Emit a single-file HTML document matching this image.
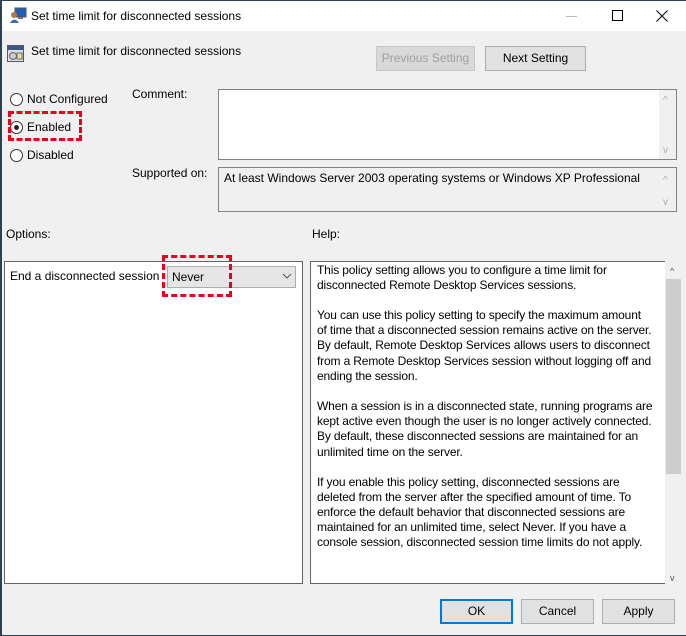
<!DOCTYPE html>
<html><head><meta charset="utf-8"><style>
*{margin:0;padding:0;box-sizing:border-box}
body{width:686px;height:636px;overflow:hidden;background:#2f4050;font-family:"Liberation Sans",sans-serif;font-size:12px;color:#000;position:relative}
.win{position:absolute;left:2px;top:1px;width:684px;height:634px;background:#f0f0f0}
.t{position:absolute;white-space:nowrap;line-height:15px}
.box{position:absolute;border:1px solid #828282;background:#fff}
.btn{position:absolute;background:#e1e1e1;border:1px solid #adadad;text-align:center;line-height:23px;height:25px}
.rad{position:absolute;width:13px;height:13px;border:1px solid #333;border-radius:50%;background:#fff}
.dash{position:absolute;border:3px dashed #e8001c}
.h{position:absolute;left:315px;white-space:nowrap;font-size:12px;letter-spacing:-0.15px}
</style></head><body>
<div class="win">
<div style="position:absolute;left:0;top:0;width:684px;height:30px;background:#fff"></div>
<svg style="position:absolute;left:7px;top:5px" width="18" height="18" viewBox="0 0 18 18"><rect x="6" y="2" width="11" height="9" fill="#1f5fb8" stroke="#555"/><rect x="9" y="11" width="5" height="2" fill="#777"/><circle cx="5" cy="9" r="3" fill="#b07a4a"/><path d="M1 17 Q5 10 10 17Z" fill="#3a6ea8"/></svg>
<div class="t" style="left:29px;top:8px">Set time limit for disconnected sessions</div>
<div style="position:absolute;left:564px;top:15px;width:11px;height:1px;background:#bbb"></div>
<div style="position:absolute;left:610px;top:9px;width:11px;height:11px;border:1px solid #000"></div>
<svg style="position:absolute;left:654px;top:9px" width="12" height="12"><path d="M0.5 0.5 L11.5 11.5 M11.5 0.5 L0.5 11.5" stroke="#000" stroke-width="1"/></svg>

<svg style="position:absolute;left:5px;top:44px" width="17" height="17" viewBox="0 0 17 17"><rect x="0.5" y="0.5" width="16" height="16" fill="#dde" stroke="#556"/><rect x="1" y="1" width="15" height="4" fill="#3c5a80"/><circle cx="6" cy="11" r="3.5" fill="#ccc" stroke="#666"/><rect x="10" y="8" width="5" height="6" fill="#f0e0a0" stroke="#666"/></svg>
<div class="t" style="left:29px;top:43px">Set time limit for disconnected sessions</div>
<div class="btn" style="left:374px;top:45px;width:99px;color:#a0a0a0;background:#d9d9d9;border-color:#c8c8c8">Previous Setting</div>
<div class="btn" style="left:483px;top:45px;width:101px">Next Setting</div>

<div class="rad" style="left:8px;top:92px"></div><div class="t" style="left:25px;top:91px">Not Configured</div>
<div class="rad" style="left:8px;top:120px"></div><div style="position:absolute;left:12px;top:124px;width:5px;height:5px;border-radius:50%;background:#222"></div><div class="t" style="left:25px;top:119px">Enabled</div>
<div class="rad" style="left:8px;top:148px"></div><div class="t" style="left:25px;top:147px">Disabled</div>
<div class="dash" style="left:6px;top:110px;width:74px;height:30px"></div>

<div class="t" style="left:130px;top:86px">Comment:</div>
<div class="box" style="left:216px;top:88px;width:459px;height:71px"></div>
<div style="position:absolute;left:657px;top:89px;width:17px;height:69px;background:#f0f0f0"></div>
<div class="t" style="left:661px;top:92px;color:#aaa;font-size:10px">^</div>
<div class="t" style="left:661px;top:142px;color:#aaa;font-size:10px">v</div>
<div class="t" style="left:130px;top:165px">Supported on:</div>
<div class="box" style="left:216px;top:166px;width:459px;height:45px;background:#f0f0f0"></div>
<div class="t" style="left:222px;top:170px">At least Windows Server 2003 operating systems or Windows XP Professional</div>
<div class="t" style="left:661px;top:172px;color:#aaa;font-size:10px">^</div>
<div class="t" style="left:661px;top:194px;color:#aaa;font-size:10px">v</div>

<div class="t" style="left:4px;top:226px">Options:</div>
<div class="t" style="left:310px;top:226px">Help:</div>

<div class="box" style="left:2px;top:260px;width:299px;height:323px;border-color:#646464"></div>
<div class="t" style="left:8px;top:268px">End a disconnected session</div>
<div style="position:absolute;left:165px;top:265px;width:129px;height:22px;background:#e5e5e5;border:1px solid #adadad"></div>
<div class="t" style="left:170px;top:269px">Never</div>
<svg style="position:absolute;left:280px;top:272px" width="10" height="6"><path d="M1 1 L5 5 L9 1" fill="none" stroke="#555"/></svg>
<div class="dash" style="left:160px;top:254px;width:70px;height:42px"></div>

<div class="box" style="left:308px;top:260px;width:356px;height:323px;border-color:#646464"></div>
<div style="position:absolute;left:663px;top:260px;width:17px;height:323px;background:#f0f0f0"></div>
<div style="position:absolute;left:664px;top:278px;width:15px;height:195px;background:#cdcdcd"></div>
<div class="t" style="left:668px;top:263px;color:#555;font-size:9px">^</div>
<div class="t" style="left:668px;top:570px;color:#555;font-size:9px">v</div>
<div class="h" style="top:262px">This policy setting allows you to configure a time limit for</div>
<div class="h" style="top:277px">disconnected Remote Desktop Services sessions.</div>
<div class="h" style="top:307px">You can use this policy setting to specify the maximum amount</div>
<div class="h" style="top:322px">of time that a disconnected session remains active on the server.</div>
<div class="h" style="top:337px">By default, Remote Desktop Services allows users to disconnect</div>
<div class="h" style="top:353px">from a Remote Desktop Services session without logging off and</div>
<div class="h" style="top:368px">ending the session.</div>
<div class="h" style="top:398px">When a session is in a disconnected state, running programs are</div>
<div class="h" style="top:413px">kept active even though the user is no longer actively connected.</div>
<div class="h" style="top:428px">By default, these disconnected sessions are maintained for an</div>
<div class="h" style="top:444px">unlimited time on the server.</div>
<div class="h" style="top:474px">If you enable this policy setting, disconnected sessions are</div>
<div class="h" style="top:489px">deleted from the server after the specified amount of time. To</div>
<div class="h" style="top:504px">enforce the default behavior that disconnected sessions are</div>
<div class="h" style="top:519px">maintained for an unlimited time, select Never. If you have a</div>
<div class="h" style="top:534px">console session, disconnected session time limits do not apply.</div>

<div class="btn" style="left:438px;top:598px;width:73px;border:2px solid #0078d7;line-height:21px">OK</div>
<div class="btn" style="left:519px;top:598px;width:73px">Cancel</div>
<div class="btn" style="left:600px;top:598px;width:73px">Apply</div>
</div>
</body></html>
